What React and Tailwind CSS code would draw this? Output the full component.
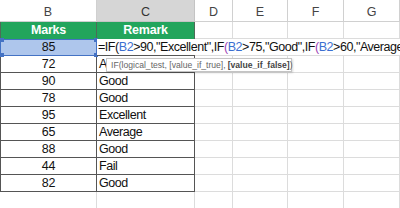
import React from "react";

const data = [
  ["72", "Average"],
  ["90", "Good"],
  ["78", "Good"],
  ["95", "Excellent"],
  ["65", "Average"],
  ["88", "Good"],
  ["44", "Fail"],
  ["82", "Good"],
];

function Light() {
  return <div className="border-r border-b border-[#dcdcdc] bg-white" />;
}

export default function App() {
  return (
    <div className="w-[400px] h-[208px] overflow-hidden bg-white font-['Liberation_Sans',Arial,sans-serif] text-[#111]">
      <div className="relative grid grid-cols-[97px_98px_38px_55px_56px_56px] grid-rows-[22px_repeat(11,17px)]">
        {/* column headers */}
        <div className="flex items-center justify-center pt-[3px] text-[12.5px] text-[#444] bg-white border-r border-b border-[#d0d0d0]">B</div>
        <div className="flex items-center justify-center pt-[3px] text-[12.5px] text-[#333] bg-[#d6d6d6] border-r border-b border-[#c4c4c4]">C</div>
        <div className="flex items-center justify-center pt-[3px] text-[12.5px] text-[#444] bg-white border-r border-b border-[#d0d0d0]">D</div>
        <div className="flex items-center justify-center pt-[3px] text-[12.5px] text-[#444] bg-white border-r border-b border-[#d0d0d0]">E</div>
        <div className="flex items-center justify-center pt-[3px] text-[12.5px] text-[#444] bg-white border-r border-b border-[#d0d0d0]">F</div>
        <div className="flex items-center justify-center pt-[3px] text-[12.5px] text-[#444] bg-white border-r border-b border-[#d0d0d0]">G</div>

        {/* green header row */}
        <div className="flex items-center justify-center bg-[#22a55c] text-white font-bold text-[12.5px] tracking-[-0.2px] border-l border-r border-[#4d6b58]">Marks</div>
        <div className="flex items-center justify-center bg-[#22a55c] text-white font-bold text-[12.5px] tracking-[-0.2px] border-r border-[#4d6b58]">Remark</div>
        <Light />
        <Light />
        <Light />
        <Light />

        {/* row 2 : selected B2 and editing C2 */}
        <div className="relative flex items-center justify-center bg-[#aec6ec] border border-[#4472c4] text-[12.5px] tracking-[-0.3px]">
          85
          <span className="absolute -left-[1px] -top-[2px] w-[4px] h-[4px] bg-[#4472c4]" />
          <span className="absolute -right-[2px] -top-[2px] w-[4px] h-[4px] bg-[#4472c4]" />
          <span className="absolute -left-[1px] -bottom-[2px] w-[4px] h-[4px] bg-[#4472c4]" />
          <span className="absolute -right-[2px] -bottom-[2px] w-[4px] h-[4px] bg-[#4472c4]" />
        </div>
        <div className="relative z-10 flex items-center pl-[1px] bg-white border-b border-[#555] text-[12.5px] tracking-[-0.45px] whitespace-nowrap overflow-visible">
          <span>=IF(</span>
          <span className="text-[#3b6fd1]">B2</span>
          <span>&gt;90,"Excellent",</span>
          <span className="inline-block w-px h-[13px] bg-[#222]" />
          <span>IF</span>
          <span className="text-[#9b3fb5]">(</span>
          <span className="text-[#3b6fd1]">B2</span>
          <span>&gt;75,"Good",IF</span>
          <span className="text-[#9b3fb5]">(</span>
          <span className="text-[#3b6fd1]">B2</span>
          <span>&gt;60,"Average"</span>
        </div>
        <div className="bg-white border-b border-[#dcdcdc]" />
        <div className="bg-white border-b border-[#dcdcdc]" />
        <div className="bg-white border-b border-[#dcdcdc]" />
        <div className="bg-white border-b border-[#dcdcdc]" />

        {/* data rows */}
        {data.map(([m, r], i) => (
          <React.Fragment key={i}>
            <div className="flex items-center justify-center text-[12.5px] tracking-[-0.3px] border-l border-r border-b border-[#555]">{m}</div>
            <div className="flex items-center pl-[2px] text-[12.5px] tracking-[-0.45px] border-r border-b border-[#555]">{r}</div>
            <Light />
            <Light />
            <Light />
            <Light />
          </React.Fragment>
        ))}

        {/* empty row */}
        <Light />
        <Light />
        <Light />
        <Light />
        <Light />
        <Light />

        {/* function tooltip */}
        <div className="absolute left-[106px] top-[58px] z-20 h-[14px] w-[186px] flex items-center pl-[4px] bg-white border border-[#c4c4c4] shadow-[1px_1px_2px_rgba(0,0,0,0.15)] text-[8.6px] text-[#666] whitespace-nowrap">
          IF(logical_test, [value_if_true],
          <span className="font-bold text-[#444] ml-[2px]">[value_if_false]</span>)
        </div>
      </div>
    </div>
  );
}
